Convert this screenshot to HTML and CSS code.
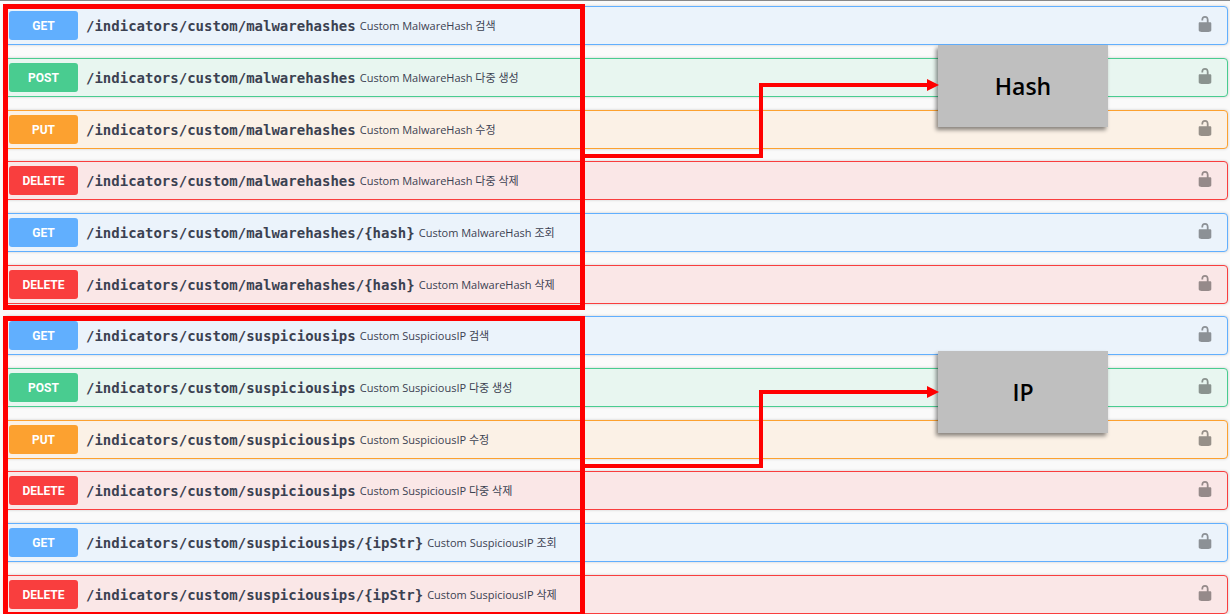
FILE: index.html
```html
<!DOCTYPE html>
<html lang="ko">
<head>
  <meta charset="UTF-8" />
  <meta name="viewport" content="width=device-width, initial-scale=1.0" />
  <title>Custom Indicators API</title>
  <link rel="stylesheet" href="styles.css">
</head>
<body>

  <svg class="sprite" aria-hidden="true">
    <symbol id="unlocked" viewBox="0 0 20 20">
      <path d="M15.8 8H14V5.6C14 2.703 12.665 1 10 1 7.334 1 6 2.703 6 5.6V6h2v-.801C8 3.754 8.797 3 10 3c1.203 0 2 .754 2 2.199V8H4c-.553 0-1 .646-1 1.199V17c0 .549.428 1.139.951 1.307l1.197.387C5.672 18.861 6.55 19 7.1 19h5.8c.549 0 1.428-.139 1.951-.307l1.196-.387c.524-.167.953-.757.953-1.306V9.199C17 8.646 16.352 8 15.8 8z"/>
    </symbol>
  </svg>

  <main class="page">

    <!-- MALWARE HASH -->
    <section class="group">
      <div class="op get">
        <span class="method">GET</span>
        <a class="path" href="#hash-search">/indicators/custom/malwarehashes</a>
        <span class="desc">Custom MalwareHash 검색</span>
        <button class="lock" type="button" aria-label="Authorize"><svg><use href="#unlocked"/></svg></button>
      </div>
      <div class="op post">
        <span class="method">POST</span>
        <a class="path" href="#hash-create">/indicators/custom/malwarehashes</a>
        <span class="desc">Custom MalwareHash 다중 생성</span>
        <button class="lock" type="button" aria-label="Authorize"><svg><use href="#unlocked"/></svg></button>
      </div>
      <div class="op put">
        <span class="method">PUT</span>
        <a class="path" href="#hash-update">/indicators/custom/malwarehashes</a>
        <span class="desc">Custom MalwareHash 수정</span>
        <button class="lock" type="button" aria-label="Authorize"><svg><use href="#unlocked"/></svg></button>
      </div>
      <div class="op delete">
        <span class="method">DELETE</span>
        <a class="path" href="#hash-delete-many">/indicators/custom/malwarehashes</a>
        <span class="desc">Custom MalwareHash 다중 삭제</span>
        <button class="lock" type="button" aria-label="Authorize"><svg><use href="#unlocked"/></svg></button>
      </div>
      <div class="op get">
        <span class="method">GET</span>
        <a class="path" href="#hash-get">/indicators/custom/malwarehashes/{hash}</a>
        <span class="desc">Custom MalwareHash 조회</span>
        <button class="lock" type="button" aria-label="Authorize"><svg><use href="#unlocked"/></svg></button>
      </div>
      <div class="op delete">
        <span class="method">DELETE</span>
        <a class="path" href="#hash-delete">/indicators/custom/malwarehashes/{hash}</a>
        <span class="desc">Custom MalwareHash 삭제</span>
        <button class="lock" type="button" aria-label="Authorize"><svg><use href="#unlocked"/></svg></button>
      </div>
    </section>

    <!-- SUSPICIOUS IP -->
    <section class="group">
      <div class="op get">
        <span class="method">GET</span>
        <a class="path" href="#ip-search">/indicators/custom/suspiciousips</a>
        <span class="desc">Custom SuspiciousIP 검색</span>
        <button class="lock" type="button" aria-label="Authorize"><svg><use href="#unlocked"/></svg></button>
      </div>
      <div class="op post">
        <span class="method">POST</span>
        <a class="path" href="#ip-create">/indicators/custom/suspiciousips</a>
        <span class="desc">Custom SuspiciousIP 다중 생성</span>
        <button class="lock" type="button" aria-label="Authorize"><svg><use href="#unlocked"/></svg></button>
      </div>
      <div class="op put">
        <span class="method">PUT</span>
        <a class="path" href="#ip-update">/indicators/custom/suspiciousips</a>
        <span class="desc">Custom SuspiciousIP 수정</span>
        <button class="lock" type="button" aria-label="Authorize"><svg><use href="#unlocked"/></svg></button>
      </div>
      <div class="op delete">
        <span class="method">DELETE</span>
        <a class="path" href="#ip-delete-many">/indicators/custom/suspiciousips</a>
        <span class="desc">Custom SuspiciousIP 다중 삭제</span>
        <button class="lock" type="button" aria-label="Authorize"><svg><use href="#unlocked"/></svg></button>
      </div>
      <div class="op get">
        <span class="method">GET</span>
        <a class="path" href="#ip-get">/indicators/custom/suspiciousips/{ipStr}</a>
        <span class="desc">Custom SuspiciousIP 조회</span>
        <button class="lock" type="button" aria-label="Authorize"><svg><use href="#unlocked"/></svg></button>
      </div>
      <div class="op delete">
        <span class="method">DELETE</span>
        <a class="path" href="#ip-delete">/indicators/custom/suspiciousips/{ipStr}</a>
        <span class="desc">Custom SuspiciousIP 삭제</span>
        <button class="lock" type="button" aria-label="Authorize"><svg><use href="#unlocked"/></svg></button>
      </div>
    </section>

    <!-- CALLOUTS -->
    <div class="frame frame-hash"></div>
    <div class="frame frame-ip"></div>

    <div class="label label-hash">Hash</div>
    <div class="label label-ip">IP</div>

    <svg class="arrow arrow-hash" width="354" height="80" viewBox="0 0 354 80" aria-hidden="true">
      <path class="line" d="M0 77H176V6H344"/>
      <path class="head" d="M342 0L354 6L342 12Z"/>
    </svg>
    <svg class="arrow arrow-ip" width="354" height="84" viewBox="0 0 354 84" aria-hidden="true">
      <path class="line" d="M0 80H176V6H344"/>
      <path class="head" d="M342 0L354 6L342 12Z"/>
    </svg>

  </main>

</body>
</html>
```
FILE: styles.css
```css
* { box-sizing: border-box; }

body {
  margin: 0;
  background: #fafafa;
  color: #3b4151;
  font-family: "Open Sans", "Noto Sans CJK KR", sans-serif;
}

.sprite { display: none; }

.page {
  position: relative;
  overflow: hidden;
  border-top: 1px solid #888;
  padding: 5px 2px 0 4px;
}

/* rows */
.op {
  display: flex;
  align-items: center;
  margin-bottom: 13px;
  padding: 4px 13px 4px 4px;
  border: 1px solid;
  border-radius: 4px;
  box-shadow: 0 0 3px rgba(0,0,0,0.19);
}
.op:nth-child(3n) { margin-bottom: 12px; }
.group:nth-of-type(2) .op:last-child { margin-bottom: 0; }

.method {
  width: 69px;
  padding-top: 1px;
  border-radius: 3px;
  color: #fff;
  font-family: Roboto, sans-serif;
  font-size: 12px;
  font-weight: 700;
  line-height: 28px;
  text-align: center;
}

.path {
  margin: 0 4px 0 8px;
  color: #3b4151;
  font-family: "DejaVu Sans Mono", "Liberation Mono", monospace;
  font-size: 14px;
  font-weight: 700;
  line-height: 20px;
  text-decoration: none;
  white-space: nowrap;
}

.desc {
  flex: 1;
  font-size: 11px;
  line-height: 20px;
  white-space: nowrap;
}

.lock {
  display: flex;
  padding: 0 0 4px;
  border: none;
  background: none;
  cursor: pointer;
}
.lock svg {
  width: 18px;
  height: 18px;
  opacity: 0.4;
}

.get { background: #ebf3fb; border-color: #61affe; }
.get .method { background: #61affe; }
.post { background: #e8f6f0; border-color: #49cc90; }
.post .method { background: #49cc90; }
.put { background: #fbf1e6; border-color: #fca130; }
.put .method { background: #fca130; }
.delete { background: #fae7e7; border-color: #f93e3e; }
.delete .method { background: #f93e3e; }

/* callouts drawn over the rows */
.frame {
  position: absolute;
  left: 3px;
  width: 582px;
  border: 5px solid #f00;
  pointer-events: none;
}
.frame-hash { top: 3px; height: 306px; }
.frame-ip { top: 315px; height: 301px; }

.label {
  position: absolute;
  left: 938px;
  width: 170px;
  background: #bfbfbf;
  box-shadow: -2px 3px 4px rgba(0,0,0,0.45);
  color: #000;
  font-size: 23px;
  font-weight: 600;
  line-height: 82px;
  text-align: center;
}
.label-hash { top: 44px; }
.label-ip { top: 350px; }

.arrow {
  position: absolute;
  left: 585px;
  pointer-events: none;
}
.arrow-hash { top: 78px; }
.arrow-ip { top: 385px; }
.arrow .line { fill: none; stroke: #f00; stroke-width: 4; }
.arrow .head { fill: #f00; }
```
